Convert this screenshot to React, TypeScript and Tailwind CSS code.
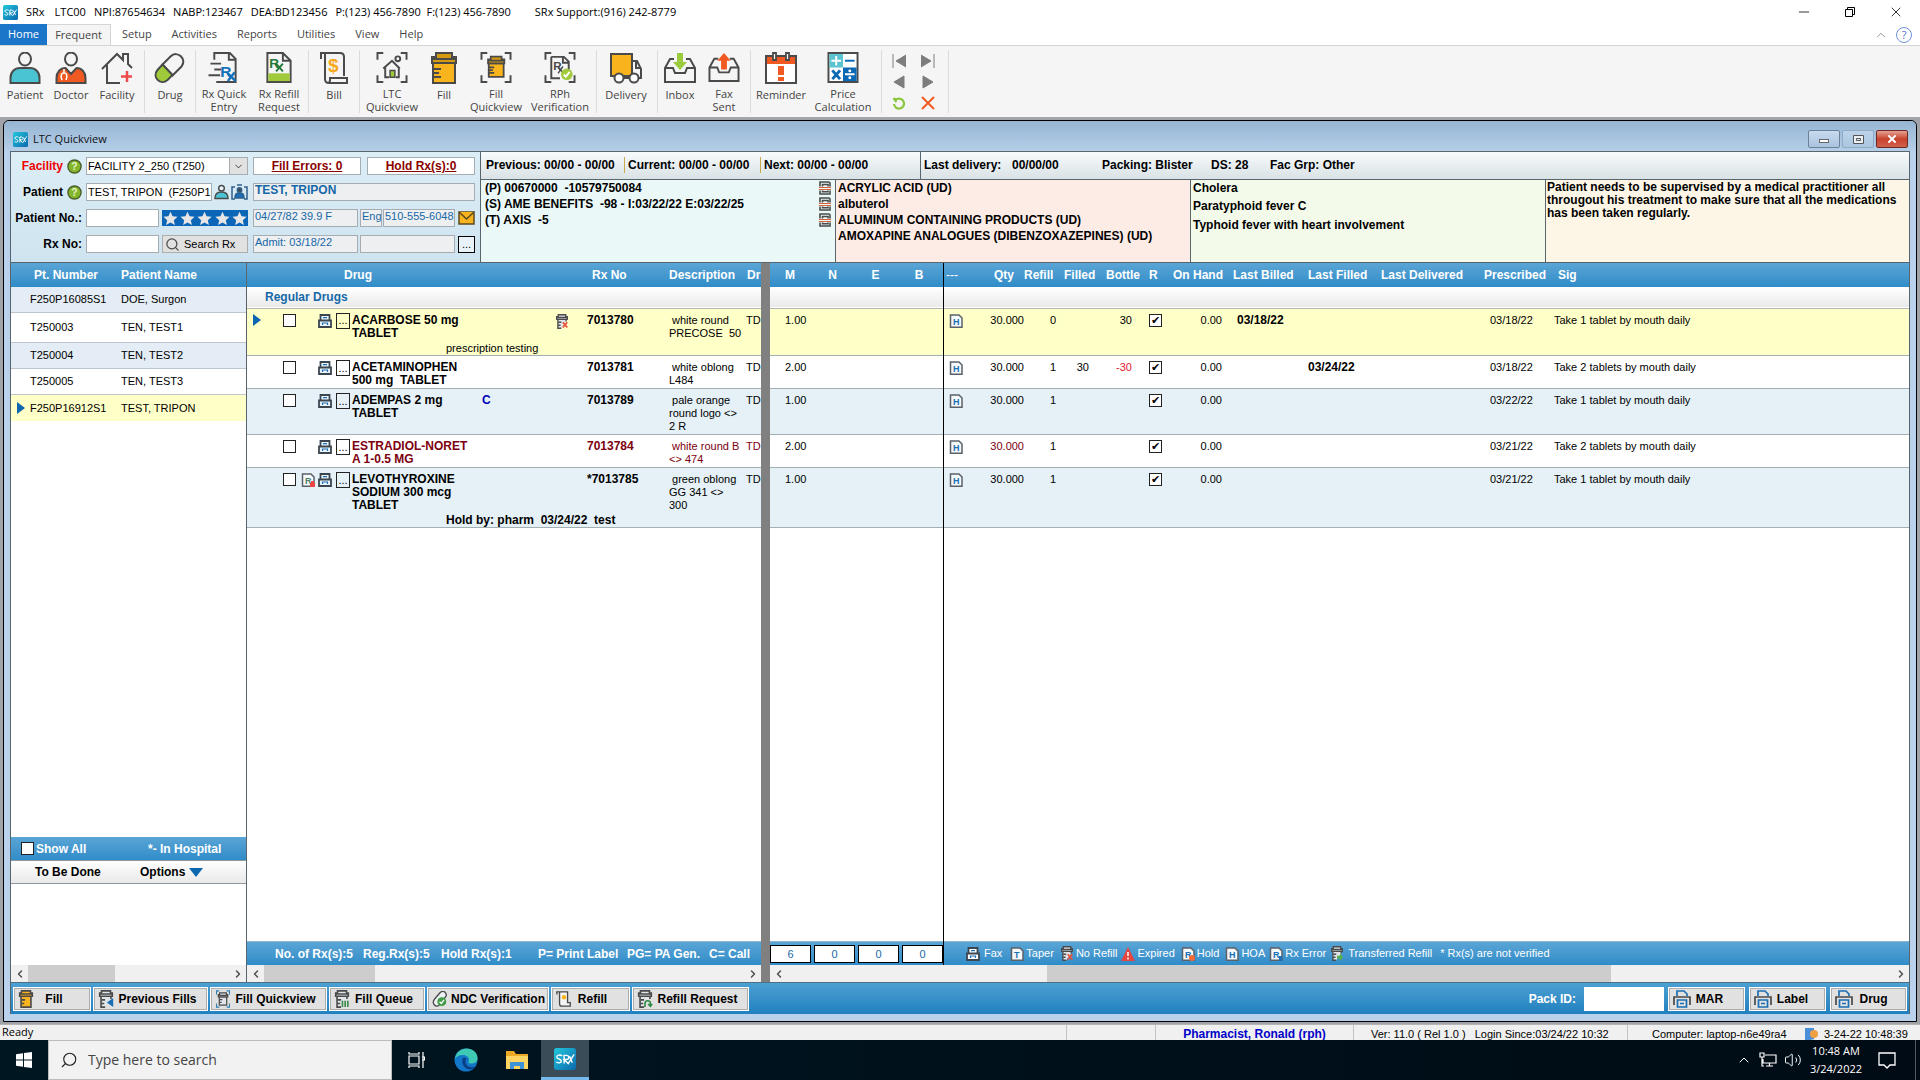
import React from 'react';
import { ChevronLeft, ChevronRight, ChevronUp, Minus, Search, Volume2, X } from 'lucide-react';

const DARK = '#4a4a4a';

/* ---------- Ribbon icons (32 x 32) ---------- */

const Icon32: React.FC<{ children: React.ReactNode }> = ({ children }) => (
  <svg viewBox="0 0 32 32" className="w-8 h-8" fill="none" stroke={DARK} strokeWidth="2" aria-hidden="true">
    {children}
  </svg>
);

const Brackets = () => <path d="M1 8V1h6M25 1h6v7M31 24v7h-6M7 31H1v-7" />;

const PatientIcon = () => (
  <Icon32>
    <ellipse cx="16" cy="7" rx="6" ry="6.500" />
    <path d="M1.500 31v-5c0-6 4-10 9.500-10h10c5.500 0 9.500 4 9.500 10v5z" fill="#4ac4d3" />
  </Icon32>
);

const DoctorIcon = () => (
  <Icon32>
    <ellipse cx="16" cy="7" rx="6" ry="6.500" />
    <path d="M1.500 31v-5c0-6 4-10 9-10l5.500 6 5.500-6c5 0 9 4 9 10v5z" fill="#f05a22" />
    <path d="M7 28c-2-6 0-7 2-7s4 1 2 7M9 21v-4" stroke="#fff" strokeWidth="1.500" />
  </Icon32>
);

const FacilityIcon = () => (
  <Icon32>
    <path d="M1 17 16 2l6 6V2h5v10l4 4M6 13v18h13" />
    <path d="M26 19v11M20 24.500h11" stroke="#ee4b4b" strokeWidth="2.500" />
  </Icon32>
);

const DrugIcon = () => (
  <Icon32>
    <path d="m8.500 12.500 8-8c7-7 17 3 11 10l-9 9z" />
    <path d="m8.500 12.500 10 10.500-5 5c-7 6-16-3-10-10z" fill="#a0ca3a" />
  </Icon32>
);

const RxQuickIcon = () => (
  <Icon32>
    <path d="M6 8V1h16l6 6v24H10M21 1v7h7M2 12h11M6 18h7M0 24h12M8 31h6" />
    <text x="12" y="26" fontSize="16" fontWeight="700" fontFamily="Liberation Sans, sans-serif" fill="#1271b8" stroke="none">R</text>
    <path d="m20 22 8 8M27 21l-7 9" stroke="#1271b8" strokeWidth="2.500" />
  </Icon32>
);

const RxRefillIcon = () => (
  <Icon32>
    <path d="M4 1h16l8 8v22H4zM20 1v8h8" />
    <path d="M5 22h22v8H5z" fill="#a0ca3a" stroke="none" />
    <text x="6" y="16" fontSize="14" fontWeight="700" fontFamily="Liberation Sans, sans-serif" fill="#23793a" stroke="none">R</text>
    <path d="m13 12 7 8M20 12l-7 8" stroke="#23793a" />
  </Icon32>
);

const BillIcon = () => (
  <Icon32>
    <path d="M3 7V1h19c3 0 4 2 4 4v19M7 2v25c0 3 2 4 4 4h18v-5H12v2c0 2-1 3-2 3" />
    <text x="10" y="20" fontSize="19" fontWeight="700" fontFamily="Liberation Sans, sans-serif" fill="#f7a81b" stroke="none">$</text>
  </Icon32>
);

const LtcIcon = () => (
  <Icon32>
    <Brackets />
    <path d="m7 17 9-8 8 8M9 16v10h4M20 26h3v-9" />
    <path d="M14 19h5v7h-5z" fill="#a0ca3a" strokeWidth="1.500" />
    <circle cx="22" cy="7" r="2.500" />
  </Icon32>
);

const Bottle: React.FC<{ fill?: string }> = ({ fill = '#f9b31c' }) => (
  <>
    <path d="M5 11h22v20H5z" fill={fill} />
    <path d="M8 1h16v4h4v6H4V5h4z" fill="#d69a10" />
    <path d="M4 7h24M5 17h8M5 21h6M5 25h8" />
  </>
);

const FillIcon = () => (
  <Icon32>
    <Bottle />
  </Icon32>
);

const FillQuickviewIcon = () => (
  <Icon32>
    <Brackets />
    <g transform="translate(5 4) scale(.7)" strokeWidth="2.600">
      <Bottle />
    </g>
  </Icon32>
);

const RphIcon = () => (
  <Icon32>
    <Brackets />
    <path d="M7 5h13l5 5v9M7 5v22h9M19 5v6h6" />
    <text x="9" y="19" fontSize="12" fontWeight="700" fontFamily="Liberation Sans, sans-serif" fill={DARK} stroke="none">R</text>
    <path d="m14 16 6 6M19 15l-5 7" strokeWidth="1.500" />
    <circle cx="23" cy="23" r="6" fill="#a0ca3a" stroke="none" />
    <path d="m20 23 2 2.500 4-5" stroke="#fff" />
  </Icon32>
);

const DeliveryIcon = () => (
  <Icon32>
    <path d="M1 2h21v22H1z" fill="#f9b31c" />
    <path d="M22 9h5l4 8v9H4M26 9v7h5" />
    <circle cx="9" cy="26" r="4.500" fill="#fff" />
    <circle cx="24" cy="26" r="4.500" fill="#fff" />
  </Icon32>
);

const TrayBase = () => <path d="M10 7H6l-5 9v14h30V16l-5-9h-4M1 16h8l2 5h10l2-5h8" />;

const InboxIcon = () => (
  <Icon32>
    <TrayBase />
    <path d="M13 1h6v9h4l-7 8-7-8h4z" fill="#9bcb3c" stroke="none" />
  </Icon32>
);

const FaxSentIcon = () => (
  <Icon32>
    <TrayBase />
    <path d="M13 18h6V9h4l-7-8-7 8h4z" fill="#f05a22" stroke="none" />
  </Icon32>
);

const ReminderIcon = () => (
  <Icon32>
    <path d="M1 4h30v27H1z" fill="#fff" />
    <path d="M2 5h28v7H2z" fill="#f05a22" stroke="none" />
    <path d="M8 1h3v7H8zM21 1h3v7h-3z" fill="#fff" strokeWidth="1.800" />
    <path d="M13 14h6v9h-6zM13 25h6v4h-6z" fill="#f05a22" stroke="none" />
  </Icon32>
);

const PriceIcon = () => (
  <Icon32>
    <path d="M1 1h30v30H1z" fill="#fff" />
    <path d="M2 2h14v14H2z" fill="#5cc3d0" stroke="none" />
    <path d="M16 16h14v14H16z" fill="#0a69b4" stroke="none" />
    <path d="M9 4v10M4 9h10M18 23h10" stroke="#fff" />
    <path d="M18 9h10" stroke="#0a69b4" />
    <path d="m5 19 8 9M13 19l-8 9" stroke="#0a69b4" strokeWidth="3" />
    <circle cx="23" cy="19.500" r="1.500" fill="#fff" stroke="none" />
    <circle cx="23" cy="26.500" r="1.500" fill="#fff" stroke="none" />
  </Icon32>
);

/* ---------- Small icons ---------- */

const Logo: React.FC<{ className: string }> = ({ className }) => (
  <svg viewBox="0 0 24 24" className={className} aria-hidden="true">
    <defs>
      <linearGradient id="srx" x1="0" y1="0" x2="1" y2="1">
        <stop offset="0" stopColor="#22c8dc" />
        <stop offset="1" stopColor="#0a68ae" />
      </linearGradient>
    </defs>
    <rect width="24" height="24" rx="3" fill="url(#srx)" />
    <path d="M9 8.500C6.500 7 3 7.500 3 9.800c0 2.700 5 1.700 5 4.400 0 2.300-3.500 2.500-5.500 1M11 17V8h2.500c3.500 0 3.500 4.500 0 4.500H11l4.500 4.500L22 7M17 9l3 7" fill="none" stroke="#fff" strokeWidth="1.500" />
  </svg>
);

const FaxIcon: React.FC<{ light?: boolean }> = ({ light }) => (
  <svg viewBox="0 0 14 14" className="w-3.5 h-3.5 shrink-0" fill={light ? '#fff' : '#eaf4fb'} stroke="#3c4650" strokeWidth="1.800" aria-hidden="true">
    <path d="M2.500 1h9v5.500h-9zM1 6.500h12V13H1z" />
    <path d="M5 3.700h4M4.500 11V9h5v2" stroke="#1c6fb4" strokeWidth="1.200" />
  </svg>
);

const PageIcon: React.FC<{ letter: string; badge?: 'lock' | 'dot' | 'mark' }> = ({ letter, badge }) => (
  <svg viewBox="0 0 14 14" className="w-3.5 h-3.5 shrink-0" aria-hidden="true">
    <path d="M1.500 1h8.500l3 3v9.200H1.500z" fill="#f4f9fc" stroke="#5b6168" strokeWidth="1.500" />
    <text x="4" y="10.500" fontSize="9" fontWeight="700" fill={badge === 'lock' ? '#4f7d6a' : '#1c6fb4'} fontFamily="Liberation Sans, sans-serif">{letter}</text>
    {badge === 'lock' && <path d="M9 10h5v4H9zM10 8h3v2h-3z" fill="#ee4444" />}
    {badge === 'dot' && <circle cx="11" cy="11" r="3" fill="#f26b3a" />}
    {badge === 'mark' && <path d="M10 9h3v5h-3z" fill="#1c6fb4" />}
  </svg>
);

const BottleSmall: React.FC<{ className: string; accent?: 'x' | 'back' | 'queue' | 'refresh' | 'frame' | 'arrow'; amber?: boolean }> = ({ className, accent, amber }) => (
  <svg viewBox="0 0 16 20" className={className} fill={amber ? '#f9b31c' : '#dfe5e8'} stroke="#4a4a4a" strokeWidth="1.800" aria-hidden="true">
    {accent === 'frame' && <path d="M.8 5V1h3M12 1h3.200v4M15.200 15v4H12M4 19H.8v-4" fill="none" stroke="#2b7fae" strokeWidth="1.200" />}
    <g transform={accent === 'frame' ? 'translate(2 2.500) scale(.75)' : undefined}>
      <path d={accent && accent !== 'frame' ? 'M7 19H2.500V7h11v3' : 'M2.500 7h11v12h-11z'} />
      <path d="M3 1h10v2.500h2V7H1V3.500h2z" />
      <path d="M1 4.500h14M3 11h4M3 15h3" />
    </g>
    {accent === 'x' && <path d="m9 11 6 7M15 11l-6 7" stroke="#e8503a" strokeWidth="2.400" />}
    {accent === 'back' && <path d="M16 9v10l-7-5z" fill="#1c6fb4" stroke="none" />}
    {accent === 'queue' && <path d="M8.500 12v7M11.500 12v7M14.500 12v7" stroke="#3a8a4a" />}
    {accent === 'refresh' && <path d="M8 19v-4a3 3 0 0 1 6 0v2M11.500 15.500l2.500 2.500 2-2.500" stroke="#2e8a44" fill="none" />}
    {accent === 'arrow' && <path d="M8 13h4v-3l4 5-4 5v-3H8z" fill="#57b04a" stroke="none" />}
  </svg>
);

const HelpDot = () => (
  <svg viewBox="0 0 16 16" className="w-[15px] h-[15px] shrink-0" aria-hidden="true">
    <circle cx="8" cy="8" r="7" fill="#83b62b" stroke="#4b5d2c" strokeWidth="1.500" />
    <text x="8" y="12" textAnchor="middle" fontSize="11" fontWeight="700" fill="#e6f4c8" fontFamily="Liberation Sans, sans-serif">?</text>
  </svg>
);

const CardIcon = () => (
  <svg viewBox="0 0 12 14" className="w-3 h-3.5" fill="none" stroke="#4a4a4a" strokeWidth="1.600" aria-hidden="true">
    <path d="M1 5.500V1h9l1 1v3.500M1 9.500V13h10V9.500M3.500 5.500v-2H9v2M3.500 9.500v1.300H9V9.500" />
    <path d="M0 6.500h12M0 8.500h12" stroke="#d9653b" strokeWidth="1.200" />
  </svg>
);

const PrinterIcon = () => (
  <svg viewBox="0 0 18 18" className="w-[18px] h-[18px]" fill="none" stroke="#4a4a4a" strokeWidth="1.700" aria-hidden="true">
    <path d="M4 6V1h7l3 3v2" stroke="#1c6fb4" />
    <path d="M1 15V7h16v8" />
    <path d="M4.500 10h9v7h-9zM7 13.500h4" stroke="#1c6fb4" />
  </svg>
);

const Triangle: React.FC = () => (
  <svg viewBox="0 0 8 12" className="w-2 h-3" fill="#0c66b0" aria-hidden="true">
    <path d="m0 0 8 6-8 6z" />
  </svg>
);

/* ---------- Data ---------- */

const TITLE_ITEMS = ['LTC00', 'NPI:87654634', 'NABP:123467', 'DEA:BD123456'];
const MENU = ['Setup', 'Activities', 'Reports', 'Utilities', 'View', 'Help'];

interface RibbonItem {
  label: string;
  icon: React.FC;
  width: string;
}

const RIBBON: { pad: string; items: RibbonItem[] }[] = [
  {
    pad: 'pl-0.5 pr-1',
    items: [
      { label: 'Patient', icon: PatientIcon, width: 'w-[46px]' },
      { label: 'Doctor', icon: DoctorIcon, width: 'w-[46px]' },
      { label: 'Facility', icon: FacilityIcon, width: 'w-[46px]' },
    ],
  },
  { pad: '', items: [{ label: 'Drug', icon: DrugIcon, width: 'w-[50px]' }] },
  {
    pad: 'pr-0.5',
    items: [
      { label: 'Rx Quick\nEntry', icon: RxQuickIcon, width: 'w-14' },
      { label: 'Rx Refill\nRequest', icon: RxRefillIcon, width: 'w-[54px]' },
    ],
  },
  { pad: '', items: [{ label: 'Bill', icon: BillIcon, width: 'w-[50px]' }] },
  {
    pad: 'pr-1',
    items: [
      { label: 'LTC\nQuickview', icon: LtcIcon, width: 'w-16' },
      { label: 'Fill', icon: FillIcon, width: 'w-10' },
      { label: 'Fill\nQuickview', icon: FillQuickviewIcon, width: 'w-16' },
      { label: 'RPh\nVerification', icon: RphIcon, width: 'w-16' },
    ],
  },
  { pad: 'pr-0.5', items: [{ label: 'Delivery', icon: DeliveryIcon, width: 'w-[58px]' }] },
  {
    pad: 'pr-1',
    items: [
      { label: 'Inbox', icon: InboxIcon, width: 'w-11' },
      { label: 'Fax\nSent', icon: FaxSentIcon, width: 'w-11' },
    ],
  },
  {
    pad: 'pr-1.5',
    items: [
      { label: 'Reminder', icon: ReminderIcon, width: 'w-[60px]' },
      { label: 'Price\nCalculation', icon: PriceIcon, width: 'w-16' },
    ],
  },
];

const PATIENTS = [
  { number: 'F250P16085S1', name: 'DOE, Surgon', row: 'h-[25px] bg-[#e4edf5]' },
  { number: 'T250003', name: 'TEN, TEST1', row: 'h-[30px] bg-white' },
  { number: 'T250004', name: 'TEN, TEST2', row: 'h-[26px] bg-[#e4edf5]' },
  { number: 'T250005', name: 'TEN, TEST3', row: 'h-[26px] bg-white' },
  { number: 'F250P16912S1', name: 'TEST, TRIPON', row: 'h-[27px] bg-[#ffffc8]', current: true },
];

interface Rx {
  drug: string;
  rxNo: string;
  desc: string;
  morning: string;
  refill: string;
  filled?: string;
  bottle?: string;
  billed?: string;
  lastFilled?: string;
  prescribed: string;
  sig: string;
  bg: string;
  height: string;
  mainHeight: string;
  note?: string;
  noteClass?: string;
  flag?: string;
  noRefill?: boolean;
  hold?: boolean;
  current?: boolean;
  expired?: boolean;
}

const RXS: Rx[] = [
  {
    drug: 'ACARBOSE 50 mg\nTABLET', rxNo: '7013780', desc: ' white round\nPRECOSE  50', morning: '1.00', refill: '0', bottle: '30',
    billed: '03/18/22', prescribed: '03/18/22', sig: 'Take 1 tablet by mouth daily', bg: 'bg-[#ffffc8]', height: 'h-[47px]',
    mainHeight: 'h-[34px]', note: 'prescription testing', noteClass: 'text-[11px]', noRefill: true, current: true,
  },
  {
    drug: 'ACETAMINOPHEN\n500 mg  TABLET', rxNo: '7013781', desc: ' white oblong\nL484', morning: '2.00', refill: '1', filled: '30', bottle: '-30',
    lastFilled: '03/24/22', prescribed: '03/18/22', sig: 'Take 2 tablets by mouth daily', bg: 'bg-white', height: 'h-[33px]', mainHeight: 'h-[33px]',
  },
  {
    drug: 'ADEMPAS 2 mg\nTABLET', rxNo: '7013789', desc: ' pale orange\nround logo <>\n2 R', morning: '1.00', refill: '1',
    prescribed: '03/22/22', sig: 'Take 1 tablet by mouth daily', bg: 'bg-[#e5f0f7]', height: 'h-[46px]', mainHeight: 'h-[46px]', flag: 'C',
  },
  {
    drug: 'ESTRADIOL-NORET\nA 1-0.5 MG', rxNo: '7013784', desc: ' white round B\n<> 474', morning: '2.00', refill: '1',
    prescribed: '03/21/22', sig: 'Take 2 tablets by mouth daily', bg: 'bg-white', height: 'h-[33px]', mainHeight: 'h-[33px]', expired: true,
  },
  {
    drug: 'LEVOTHYROXINE\nSODIUM 300 mcg\nTABLET', rxNo: '*7013785', desc: ' green oblong\nGG 341 <>\n300', morning: '1.00', refill: '1',
    prescribed: '03/21/22', sig: 'Take 1 tablet by mouth daily', bg: 'bg-[#e5f0f7]', height: 'h-[60px]', mainHeight: 'h-[46px]',
    note: 'Hold by: pharm  03/24/22  test', noteClass: 'text-xs font-bold', hold: true,
  },
];

const HEAD = 'h-6 bg-linear-to-b from-[#5aa5d6] to-[#2f8cc8] text-white text-xs font-bold text-left whitespace-pre';
const CATEGORY = 'h-[21px] bg-linear-to-b from-white to-[#eaeaea] border-b border-[#b5b5b5]';
const CELL = 'align-top pt-[5px] leading-[13px] whitespace-pre';
const FOOTER = 'h-6 shrink-0 bg-linear-to-b from-[#5aa5d6] to-[#2f8cc8] text-white border-t border-[#8fb4cc]';
const FIELD = 'h-[18px] bg-[#eeeff0] border border-[#a5acb2] text-[#1668a8] leading-3 pl-px whitespace-nowrap overflow-hidden';
const INPUT = 'h-[18px] bg-white border border-[#a5acb2] text-[11px] font-normal leading-4 pl-px min-w-0';

/* ---------- Shared pieces ---------- */

const Scrollbar: React.FC<{ thumb: string }> = ({ thumb }) => (
  <div className="flex h-[17px] shrink-0 bg-[#f0f0f0] text-[#505050]">
    <button aria-label="Scroll left" className="w-[17px] grid place-items-center"><ChevronLeft size={12} strokeWidth={3} /></button>
    <div className="flex-1"><div className={`h-full bg-[#cdcdcd] ${thumb}`} /></div>
    <button aria-label="Scroll right" className="w-[17px] grid place-items-center"><ChevronRight size={12} strokeWidth={3} /></button>
  </div>
);

const Tick: React.FC<{ label: string; checked?: boolean; className?: string }> = ({ label, checked, className = '' }) => (
  <input
    type="checkbox"
    aria-label={label}
    defaultChecked={checked}
    className={`appearance-none w-[13px] h-[13px] block shrink-0 bg-white border border-[#222] text-[11px] leading-[11px] text-center font-['DejaVu_Sans'] checked:before:content-['✔'] ${className}`}
  />
);

const ToolButton: React.FC<{ label: string; size: string; children: React.ReactNode }> = ({ label, size, children }) => (
  <button className={`h-6 ${size} flex items-center bg-[#e1e1e1] border border-white outline-1 -outline-offset-2 outline-[#adadad] pl-1 text-xs font-bold text-black whitespace-nowrap`}>
    {children}
    <span className="flex-1 text-center">{label}</span>
  </button>
);

/* ---------- Application header ---------- */

const AppHeader = () => (
  <header className="font-['Open_Sans',sans-serif] text-[11px] text-black">
    <div className="flex items-center h-6 pl-[3px] bg-white whitespace-pre">
      <Logo className="w-[15px] h-[15px] mr-2" />
      <span className="mr-2.5">SRx</span>
      {TITLE_ITEMS.map((item) => (
        <span key={item} className="mr-2">{item}</span>
      ))}
      <span>P:(123) 456-7890  F:(123) 456-7890</span>
      <span className="ml-6">SRx Support:(916) 242-8779</span>
      <div className="ml-auto flex items-center gap-[30px] pr-4">
        <button aria-label="Minimize"><Minus size={16} strokeWidth={1.2} /></button>
        <button aria-label="Restore">
          <svg viewBox="0 0 12 12" className="w-3 h-3 mx-0.5" fill="none" stroke="#000"><path d="M1.500 3.500h7v7h-7zM3.500 3.500v-2h7v7h-2" /></svg>
        </button>
        <button aria-label="Close"><X size={16} strokeWidth={1.2} /></button>
      </div>
    </div>

    <nav className="flex h-[21px] bg-white text-[#444] items-stretch">
      <button className="w-[47px] bg-[#1b75c9] text-white">Home</button>
      <button className="w-16 bg-[#f5f5f5] border-t border-r border-[#d5d5d5]">Frequent</button>
      <div className="flex items-center gap-5 pl-[11px]">
        {MENU.map((item) => (
          <button key={item}>{item}</button>
        ))}
      </div>
      <div className="ml-auto flex items-center gap-2 pr-2">
        <button aria-label="Collapse ribbon"><ChevronUp size={14} strokeWidth={1.5} color="#888" /></button>
        <button aria-label="Help" className="w-4 h-4 rounded-full border border-[#6f93d8] text-[#4a76c9] leading-[14px]">?</button>
      </div>
    </nav>

    <div className="flex h-[73px] py-1 bg-[#f5f5f5] border-y border-t-[#d5d5d5] border-b-[#a8a8a8] text-[#444]">
      {RIBBON.map((group, i) => (
        <div key={i} className={`flex border-r border-[#dcdcdc] ${group.pad}`}>
          {group.items.map(({ label, icon: Glyph, width }) => (
            <button key={label} className={`${width} flex flex-col items-center pt-0.5`}>
              <Glyph />
              <span className="mt-1 leading-[13px] whitespace-pre text-center">{label}</span>
            </button>
          ))}
        </div>
      ))}
      <div className="grid grid-cols-[29px_29px] place-items-center w-[67px] pl-0.5 border-r border-[#dcdcdc]">
        {[
          ['First', 'M1 0v14M14 1v12L4 7z', '#7d7d7d'],
          ['Last', 'M13 0v14M0 1v12l10-6z', '#7d7d7d'],
          ['Previous', 'M12 1v12L2 7z', '#7d7d7d'],
          ['Next', 'M2 1v12l10-6z', '#7d7d7d'],
        ].map(([name, d, color]) => (
          <button key={name} aria-label={name}>
            <svg viewBox="0 0 14 14" className="w-3.5 h-3.5" fill={color} stroke={color}><path d={d} /></svg>
          </button>
        ))}
        <button aria-label="Refresh">
          <svg viewBox="0 0 14 14" className="w-3.5 h-3.5" fill="none" stroke="#8cc63f" strokeWidth="2.200"><path d="M2 8a5 5 0 1 0 3-5H2M1.500 2l3 4" /></svg>
        </button>
        <button aria-label="Cancel">
          <svg viewBox="0 0 14 14" className="w-3.5 h-3.5" stroke="#f05a22" strokeWidth="2"><path d="m1 1 12 12M13 1 1 13" /></svg>
        </button>
      </div>
    </div>
  </header>
);

/* ---------- Patient summary ---------- */

const FormRow: React.FC<{ label: string; id: string; help?: boolean; red?: boolean; children: React.ReactNode }> = ({ label, id, help, red, children }) => (
  <div className="flex items-center h-[18px] pl-px">
    <label htmlFor={id} className={`w-[70px] mr-1 flex justify-end items-center gap-1 text-xs font-bold whitespace-nowrap ${red ? 'text-[#f00000]' : 'text-black'}`}>
      {label}
      {help && <HelpDot />}
    </label>
    {children}
  </div>
);

const PatientForm = () => (
  <div className="w-[470px] shrink-0 flex flex-col gap-2 pt-[5px] border-r border-[#59656d] bg-linear-to-b from-[#dceef6] to-[#cfe4f0]">
    <FormRow label="Facility" id="facility" help red>
      <div className="relative w-[162px] mr-[5px]">
        <select id="facility" className={`${INPUT} w-full appearance-none block`}>
          <option>FACILITY 2_250 (T250)</option>
        </select>
        <span className="pointer-events-none absolute right-0 top-0 w-[19px] h-[18px] grid place-items-center bg-[#e1e1e1] border border-[#a5acb2]">
          <ChevronRight size={11} strokeWidth={1.5} className="rotate-90" />
        </span>
      </div>
      <button className="w-[108px] h-[18px] mr-1.5 bg-white border border-[#a5acb2] text-xs leading-4 font-bold underline text-[#8b0000]">Fill Errors:  0</button>
      <button className="w-[108px] h-[18px] bg-white border border-[#a5acb2] text-xs leading-4 font-bold underline text-[#8b0000]">Hold Rx(s):0</button>
    </FormRow>
    <FormRow label="Patient" id="patient" help>
      <input id="patient" defaultValue="TEST, TRIPON  (F250P16912S1)" className={`${INPUT} w-[126px]`} />
      <button aria-label="Patient profile" className="mx-0.5">
        <svg viewBox="0 0 16 16" className="w-[15px] h-4" fill="#4ac4d3" stroke="#4a4a4a" strokeWidth="1.500"><circle cx="8" cy="4" r="3" fill="#e8f4fa" /><path d="M1 15c0-5 2-7 7-7s7 2 7 7z" /></svg>
      </button>
      <button aria-label="Patient card" className="mr-[5px]">
        <svg viewBox="0 0 17 16" className="w-[17px] h-4" fill="none" stroke="#2f5f8c" strokeWidth="1.500"><path d="M4 3H1v12h3M13 3h3v12h-3" /><circle cx="8.500" cy="6" r="2.200" fill="#4a4a4a" /><path d="M4 14c0-4 1-5 4.500-5s4.500 1 4.500 5z" fill="#1c6fb4" /><path d="M6 1h5" /></svg>
      </button>
      <div className={`${FIELD} w-[222px] text-xs leading-3 font-bold`}>TEST, TRIPON</div>
    </FormRow>
    <FormRow label="Patient No.:" id="patient-no">
      <input id="patient-no" className={`${INPUT} w-[73px] mr-[3px]`} />
      <div className="w-[86px] h-4 mr-[5px] flex items-center justify-around bg-[#0c66b8]">
        {[1, 2, 3, 4, 5].map((n) => (
          <svg key={n} viewBox="0 0 24 24" className="w-[15px] h-[15px]" fill="#e6e6e6"><path d="m12 1 3.300 7.400 8 .8-6 5.400 1.700 7.900-7-4.100-7 4.100 1.700-7.900-6-5.400 8-.8z" /></svg>
        ))}
      </div>
      <div className={`${FIELD} w-[105px] mr-0.5 text-[11px] font-normal`}>04/27/82 39.9 F</div>
      <div className={`${FIELD} w-[22px] mr-px text-[11px] font-normal`}>Eng</div>
      <div className={`${FIELD} w-[72px] mr-[3px] text-[11px] font-normal`}>510-555-6048</div>
      <button aria-label="Send mail">
        <svg viewBox="0 0 17 14" className="w-[17px] h-3.5" fill="#f9b31c" stroke="#5a4a20" strokeWidth="1.500"><path d="M1 1h15v12H1z" /><path d="m1 1 7.500 7L16 1" /></svg>
      </button>
    </FormRow>
    <FormRow label="Rx No:" id="rx-no">
      <input id="rx-no" className={`${INPUT} w-[73px] mr-[3px]`} />
      <button className="w-[86px] h-[18px] mr-[5px] flex items-center gap-1 pl-0.5 bg-[#e1e1e1] border border-[#adadad] text-[11px] font-normal">
        <Search size={15} strokeWidth={2} color="#4a4a4a" />
        Search Rx
      </button>
      <div className={`${FIELD} w-[105px] mr-0.5 text-[11px] font-normal`}>Admit: 03/18/22</div>
      <div className={`${FIELD} w-[95px] mr-[3px]`} />
      <button className="w-[17px] h-[17px] border border-black bg-[#e8f2f8] text-[11px] font-normal leading-3">...</button>
    </FormRow>
  </div>
);

const Summary = () => (
  <section className="flex h-[111px] shrink-0 border-b border-[#59656d] text-xs font-bold">
    <PatientForm />
    <div className="flex-1 min-w-0 flex flex-col">
      <div className="flex h-7 shrink-0 border-b border-[#59656d] bg-linear-to-b from-[#f8fbfc] to-[#d9e2e5] whitespace-pre">
        <div className="w-[440px] flex items-center pl-[5px] pb-0.5 border-r border-[#59656d]">
          <span className="w-[139px] mr-[3px] border-r border-[#c9a84a]">Previous: 00/00 - 00/00</span>
          <span className="w-[133px] mr-[3px] border-r border-[#c9a84a]">Current: 00/00 - 00/00</span>
          <span>Next: 00/00 - 00/00</span>
        </div>
        <div className="flex items-center pl-[3px] pb-0.5">
          <span className="w-[88px]">Last delivery:</span>
          <span className="w-[90px]">00/00/00</span>
          <span className="w-[109px]">Packing: Blister</span>
          <span className="w-[59px]">DS: 28</span>
          <span>Fac Grp: Other</span>
        </div>
      </div>
      <div className="flex-1 grid grid-cols-[355px_355px_355px_1fr]">
        <div className="flex justify-between pl-1 pr-1 bg-[#eaf9f8] border-r border-[#59656d] leading-4 whitespace-pre">
          <ul>
            <li>(P) 00670000  -10579750084</li>
            <li>(S) AME BENEFITS  -98 - I:03/22/22 E:03/22/25</li>
            <li>(T) AXIS  -5</li>
          </ul>
          <div className="flex flex-col gap-0.5 pt-px">
            <CardIcon />
            <CardIcon />
            <CardIcon />
          </div>
        </div>
        <ul className="pl-0.5 bg-[#fdece6] border-r border-[#59656d] leading-4">
          <li>ACRYLIC ACID (UD)</li>
          <li>albuterol</li>
          <li>ALUMINUM CONTAINING PRODUCTS (UD)</li>
          <li>AMOXAPINE ANALOGUES (DIBENZOXAZEPINES) (UD)</li>
        </ul>
        <ul className="pl-0.5 bg-[#f3faea] border-r border-[#59656d] leading-[19px]">
          <li className="leading-4 pb-px">Cholera</li>
          <li>Paratyphoid fever C</li>
          <li>Typhoid fever with heart involvement</li>
        </ul>
        <p className="pl-px pr-3 pt-px bg-[#fdf6e6] leading-[13px]">
          Patient needs to be supervised by a medical practitioner all througout his treatment to make sure that all the medications has been taken regularly.
        </p>
      </div>
    </div>
  </section>
);

/* ---------- Grids ---------- */

const PatientList = () => (
  <aside className="w-[236px] shrink-0 flex flex-col bg-white border-r border-[#59656d]">
    <table className="w-full table-fixed border-collapse text-[11px]">
      <colgroup>
        <col className="w-[19px]" />
        <col className="w-[91px]" />
        <col />
      </colgroup>
      <thead>
        <tr className={HEAD}>
          <th colSpan={2} className="pl-[23px]">Pt. Number</th>
          <th>Patient Name</th>
        </tr>
      </thead>
      <tbody>
        {PATIENTS.map((p) => (
          <tr key={p.number} className={`${p.row} border-b border-[#bcc6cc] last:border-b-0`}>
            <td className="pl-1.5">{p.current && <Triangle />}</td>
            <td>{p.number}</td>
            <td>{p.name}</td>
          </tr>
        ))}
      </tbody>
    </table>
    <div className="flex-1" />
    <div className="flex items-center h-[23px] shrink-0 pl-2.5 bg-linear-to-b from-[#5aa5d6] to-[#2f8cc8] text-white text-xs font-bold">
      <label className="flex items-center gap-0.5 w-[127px]">
        <Tick label="Show All" />
        Show All
      </label>
      <span>*- In Hospital</span>
    </div>
    <div className="flex items-center h-6 shrink-0 pl-6 bg-linear-to-b from-white to-[#e9e9e9] border-y border-[#8f989e] text-xs font-bold">
      <span className="w-[105px]">To Be Done</span>
      <button className="flex items-center gap-1">
        Options
        <svg viewBox="0 0 14 9" className="w-3.5 h-[9px]" fill="#0c66b0"><path d="M0 0h14L7 9z" /></svg>
      </button>
    </div>
    <div className="h-[81px] shrink-0" />
    <Scrollbar thumb="w-[87px]" />
  </aside>
);

const DrugGrid = () => (
  <section className="w-[514px] shrink-0 flex flex-col bg-white overflow-hidden">
    <table className="w-full table-fixed border-collapse text-[11px]">
      <colgroup>
        <col className="w-[30px]" />
        <col className="w-[22px]" />
        <col className="w-[18px]" />
        <col className="w-[18px]" />
        <col className="w-4" />
        <col className="w-[124px]" />
        <col className="w-[72px]" />
        <col className="w-9" />
        <col className="w-[84px]" />
        <col className="w-[76px]" />
        <col />
      </colgroup>
      <thead>
        <tr className={HEAD}>
          <th colSpan={8} className="pl-[97px]">Drug</th>
          <th className="pl-[9px]">Rx No</th>
          <th className="pl-0.5">Description</th>
          <th className="pl-1">Dr</th>
        </tr>
      </thead>
      <tbody>
        <tr className={CATEGORY}>
          <td colSpan={11} className="pl-[18px] text-xs leading-4 font-bold text-[#1668a8]">Regular Drugs</td>
        </tr>
      </tbody>
      {RXS.map((rx) => (
        <tbody key={rx.rxNo} className={`${rx.bg} border-b border-[#a3b0b3] ${rx.expired ? 'text-[#7d0010]' : 'text-black'}`}>
          <tr className={rx.mainHeight}>
            <td className={`${CELL} pl-1.5`}>{rx.current && <Triangle />}</td>
            <td className={`${CELL} pl-1.5`}><Tick label={`Select ${rx.rxNo}`} /></td>
            <td className={`${CELL} pl-0.5`}>{rx.hold && <PageIcon letter="R" badge="lock" />}</td>
            <td className={`${CELL} pl-px`}><FaxIcon /></td>
            <td className="align-top pt-1 pl-px">
              <button aria-label={`Details ${rx.rxNo}`} className="block w-3.5 h-4 border border-[#222] leading-[13px] text-black">...</button>
            </td>
            <td className={`${CELL} pl-px text-xs leading-[13px] font-bold`}>{rx.drug}</td>
            <td className={`${CELL} pl-[7px] text-xs leading-[13px] font-bold text-[#0000b8]`}>{rx.flag}</td>
            <td className={`${CELL} pl-2`}>{rx.noRefill && <BottleSmall className="w-3.5 h-[15px]" accent="x" />}</td>
            <td className={`${CELL} pl-1 text-xs leading-[13px] font-bold`}>{rx.rxNo}</td>
            <td className={`${CELL} pl-0.5`}>{rx.desc}</td>
            <td className={`${CELL} pl-[3px]`}>TD</td>
          </tr>
          {rx.note && (
            <tr>
              <td colSpan={11} className={`align-top pl-[199px] leading-[13px] whitespace-pre ${rx.noteClass}`}>{rx.note}</td>
            </tr>
          )}
        </tbody>
      ))}
    </table>
    <div className="flex-1" />
    <div className={`${FOOTER} flex items-center pl-7 text-xs font-bold whitespace-pre`}>
      <span className="w-[88px]">No. of Rx(s):5</span>
      <span className="w-[78px]">Reg.Rx(s):5</span>
      <span className="w-[97px]">Hold Rx(s):1</span>
      <span className="w-[89px]">P= Print Label</span>
      <span className="w-[82px]">PG= PA Gen.</span>
      <span>C= Call</span>
    </div>
    <Scrollbar thumb="w-[111px]" />
  </section>
);

const DoseGrid = () => (
  <div className="w-[174px] shrink-0 flex flex-col border-r border-black">
    <table className="w-full table-fixed border-collapse text-[11px]">
      <thead>
        <tr className={HEAD}>
          {['M', 'N', 'E', 'B'].map((slot) => (
            <th key={slot} className="pl-[15px]">{slot}</th>
          ))}
        </tr>
      </thead>
      <tbody>
        <tr className={CATEGORY}><td colSpan={4} /></tr>
        {RXS.map((rx) => (
          <tr key={rx.rxNo} className={`${rx.bg} ${rx.height} border-b border-[#a3b0b3]`}>
            <td className={`${CELL} pl-[15px]`}>{rx.morning}</td>
            <td colSpan={3} />
          </tr>
        ))}
      </tbody>
    </table>
    <div className="flex-1" />
    <div className={`${FOOTER} flex items-center gap-[3px]`}>
      {['6', '0', '0', '0'].map((total, i) => (
        <output key={i} className="flex-1 h-[18px] bg-white border border-black text-center text-[11px] leading-4 text-[#1668a8]">{total}</output>
      ))}
    </div>
  </div>
);

const DetailGrid = () => (
  <div className="flex-1 min-w-0 flex flex-col">
    <table className="w-full table-fixed border-collapse text-[11px]">
      <colgroup>
        <col className="w-[38px]" />
        <col className="w-[42px]" />
        <col className="w-8" />
        <col className="w-10" />
        <col className="w-12" />
        <col className="w-6" />
        <col className="w-[60px]" />
        <col className="w-[76px]" />
        <col className="w-[72px]" />
        <col className="w-[104px]" />
        <col className="w-[72px]" />
        <col />
      </colgroup>
      <thead>
        <tr className={HEAD}>
          <th className="pl-0.5 font-normal">---</th>
          <th className="pl-3">Qty</th>
          <th>Refill</th>
          <th className="pl-2">Filled</th>
          <th className="pl-2.5">Bottle</th>
          <th className="pl-[5px]">R</th>
          <th className="pl-[5px]">On Hand</th>
          <th className="pl-[5px]">Last Billed</th>
          <th className="pl-1">Last Filled</th>
          <th className="pl-[5px]">Last Delivered</th>
          <th className="pl-1">Prescribed</th>
          <th className="pl-1.5">Sig</th>
        </tr>
      </thead>
      <tbody>
        <tr className={CATEGORY}><td colSpan={12} /></tr>
        {RXS.map((rx) => (
          <tr key={rx.rxNo} className={`${rx.bg} ${rx.height} border-b border-[#a3b0b3]`}>
            <td className={`${CELL} pl-[5px]`}><PageIcon letter="H" /></td>
            <td className={`${CELL} text-right ${rx.expired ? 'text-[#7d0010]' : ''}`}>30.000</td>
            <td className={`${CELL} text-right`}>{rx.refill}</td>
            <td className={`${CELL} pr-[7px] text-right`}>{rx.filled}</td>
            <td className={`${CELL} pr-3 text-right ${rx.bottle === '-30' ? 'text-[#e0202c]' : ''}`}>{rx.bottle}</td>
            <td className={`${CELL} pl-[5px]`}><Tick label={`Refillable ${rx.rxNo}`} checked /></td>
            <td className={`${CELL} pr-1.5 text-right`}>0.00</td>
            <td className={`${CELL} pl-[9px] text-xs leading-[13px] font-bold`}>{rx.billed}</td>
            <td className={`${CELL} pl-1 text-xs leading-[13px] font-bold`}>{rx.lastFilled}</td>
            <td />
            <td className={`${CELL} pl-2.5`}>{rx.prescribed}</td>
            <td className={`${CELL} pl-0.5`}>{rx.sig}</td>
          </tr>
        ))}
      </tbody>
    </table>
    <div className="flex-1" />
    <div className={`${FOOTER} flex items-center gap-1 pl-[22px] text-[11px] whitespace-pre`}>
      <span className="flex items-center gap-1 mr-1"><FaxIcon light />Fax</span>
      <span className="flex items-center gap-0.5 mr-0.5"><PageIcon letter="T" />Taper</span>
      <span className="flex items-center gap-0.5"><BottleSmall className="w-3.5 h-[15px]" accent="x" />No Refill</span>
      <span className="flex items-center gap-0.5 mr-0.5">
        <svg viewBox="0 0 14 14" className="w-3.5 h-3.5"><path d="m7 0 7 14H0z" fill="#e4453f" /><path d="M7 5v4M7 10.500v2" stroke="#fff" strokeWidth="1.500" /></svg>
        Expired
      </span>
      <span className="flex items-center gap-0.5 mr-0.5"><PageIcon letter="R" badge="dot" />Hold</span>
      <span className="flex items-center gap-0.5"><PageIcon letter="H" />HOA</span>
      <span className="flex items-center gap-0.5"><PageIcon letter="R" badge="mark" />Rx Error</span>
      <span className="flex items-center gap-1 mr-1"><BottleSmall className="w-3.5 h-[15px]" accent="arrow" />Transferred Refill</span>
      <span>* Rx(s) are not verified</span>
    </div>
  </div>
);

const Toolbar = () => (
  <div className="flex items-center gap-0.5 h-8 shrink-0 px-0.5 border-t border-[#4d6f86] bg-linear-to-b from-[#4ba0d3] to-[#2080be]">
    <ToolButton label="Fill" size="w-[78px] pr-4"><BottleSmall className="w-4 h-[18px]" amber /></ToolButton>
    <ToolButton label="Previous Fills" size="w-[115px] pr-1.5"><BottleSmall className="w-4 h-[18px]" accent="back" /></ToolButton>
    <ToolButton label="Fill Quickview" size="w-[117px] pr-1.5"><BottleSmall className="w-4 h-[18px]" accent="frame" /></ToolButton>
    <ToolButton label="Fill Queue" size="w-[96px] pr-1.5"><BottleSmall className="w-4 h-[18px]" accent="queue" /></ToolButton>
    <ToolButton label="NDC Verification" size="w-[122px]">
      <svg viewBox="0 0 18 18" className="w-4 h-4" fill="#eef2f4" stroke="#4a4a4a" strokeWidth="1.500"><path d="m3 9 6-7c4-4 9 1 6 5l-7 9c-4 3-9-2-5-7z" /><circle cx="11" cy="12" r="5" fill="#3f9b45" stroke="none" /><path d="m8.500 12 2 2 3-4" stroke="#fff" fill="none" /></svg>
    </ToolButton>
    <ToolButton label="Refill" size="w-[79px] pr-4">
      <svg viewBox="0 0 18 18" className="w-4 h-4" fill="#f4f4f4" stroke="#4a4a4a" strokeWidth="1.500"><path d="M1 4V1h12v12h3v4H6c-2 0-2-1-2-3V1" /><circle cx="9" cy="7" r="2.500" fill="#f9b31c" stroke="none" /></svg>
    </ToolButton>
    <ToolButton label="Refill Request" size="w-[117px] pr-1.5"><BottleSmall className="w-4 h-[18px]" accent="refresh" /></ToolButton>
    <label htmlFor="pack-id" className="ml-auto mr-1.5 text-xs font-bold text-white">Pack ID:</label>
    <input id="pack-id" className="w-20 h-6 bg-white" />
    <div className="flex gap-1 ml-0.5">
      <ToolButton label="MAR" size="w-[77px] pr-4"><PrinterIcon /></ToolButton>
      <ToolButton label="Label" size="w-[77px] pr-3"><PrinterIcon /></ToolButton>
      <ToolButton label="Drug" size="w-[77px] pr-3"><PrinterIcon /></ToolButton>
    </div>
  </div>
);

/* ---------- Child window ---------- */

const QuickviewWindow = () => (
  <main className="flex-1 flex flex-col px-[3px] pt-0.5 pb-0.5 bg-[#a0a4a8]">
    <div className="flex-1 flex flex-col px-1.5 pb-[7px] rounded-t-md border border-black bg-[#b9d1ea]">
      <div className="flex items-center h-[30px] shrink-0 -mx-1.5 px-2 pt-1.5 rounded-t-md bg-linear-to-b from-[#97b5d3] to-[#b4cee8]">
        <Logo className="w-[15px] h-[15px] ml-px mr-[5px]" />
        <h1 className="font-['Open_Sans',sans-serif] text-[11px] text-[#111]">LTC Quickview</h1>
        <div className="ml-auto flex gap-0.5 text-[#555]">
          <button aria-label="Minimize window" className="w-8 h-[18px] grid place-items-center rounded-xs border border-[#6b8099] bg-linear-to-b from-[#c8dbee] to-[#a9c3de]">
            <span className="w-2.5 h-1 mt-1 bg-white border border-[#666]" />
          </button>
          <button aria-label="Restore window" className="w-8 h-[18px] grid place-items-center rounded-xs border border-[#91aac4] bg-linear-to-b from-[#bcd3ea] to-[#abc6e1]">
            <svg viewBox="0 0 11 9" className="w-[11px] h-[9px]" fill="#e8eef4" stroke="#555"><path d="M.5.5h10v8H.5zM3.500 3.500h4v2h-4z" /></svg>
          </button>
          <button aria-label="Close window" className="w-8 h-[18px] grid place-items-center rounded-xs border border-[#6d2a22] bg-linear-to-b from-[#e3a193] via-[#c8402c] to-[#d0604c] text-white">
            <X size={12} strokeWidth={4} />
          </button>
        </div>
      </div>
      <div className="flex-1 flex flex-col border border-b-0 border-[#59656d]">
        <Summary />
        <div className="flex-1 flex">
          <PatientList />
          <DrugGrid />
          <div className="w-[9px] shrink-0 bg-[#808080]" />
          <section className="flex-1 min-w-0 flex flex-col bg-white">
            <div className="flex-1 flex">
              <DoseGrid />
              <DetailGrid />
            </div>
            <Scrollbar thumb="ml-[260px] w-[564px]" />
          </section>
        </div>
        <Toolbar />
      </div>
    </div>
  </main>
);

/* ---------- Status bar and taskbar ---------- */

const StatusBar = () => (
  <div className="flex h-4 shrink-0 overflow-hidden bg-[#f0f0f0] border-t border-[#b5b5b5] text-[11px] whitespace-pre leading-[18px]">
    <span className="flex-1 pl-0.5 leading-[14px] font-['Open_Sans',sans-serif]">Ready</span>
    <span className="w-[89px] border-l border-[#c4c4c4]" />
    <a href="#user" className="w-[198px] border-l border-[#c4c4c4] text-center text-xs leading-[18px] font-bold text-[#0000c8]">Pharmacist, Ronald (rph)</a>
    <span className="w-[274px] border-l border-[#c4c4c4] pl-[17px]">Ver: 11.0 ( Rel 1.0 )   Login Since:03/24/22 10:32</span>
    <span className="w-[177px] border-l border-[#c4c4c4] pl-6">Computer: laptop-n6e49ra4</span>
    <span className="w-[116px] flex items-start gap-1">
      <svg viewBox="0 0 16 16" className="w-4 h-4 mt-0.5"><path d="M1 1h9v13H1z" fill="#4a8fd8" /><circle cx="10" cy="7" r="4" fill="#f0a040" /><path d="M4 16c0-5 12-5 12 0z" fill="#e8e8e8" /></svg>
      3-24-22 10:48:39
    </span>
  </div>
);

const Taskbar = () => (
  <footer className="flex h-10 shrink-0 bg-linear-to-r from-[#001722] to-[#000b15] text-white font-['Open_Sans',sans-serif]">
    <button aria-label="Start" className="w-12 grid place-items-center">
      <svg viewBox="0 0 16 16" className="w-4 h-4" fill="#fff"><path d="m0 2.200 7-1v6.300H0zM8 1l8-1v7.500H8zM0 8.500h7v6.300l-7-1zM8 8.500h8V16l-8-1z" /></svg>
    </button>
    <label className="w-[344px] flex items-center gap-2.5 pl-[11px] bg-[#f2f2f2] border border-[#bbb] text-[#444]">
      <Search size={18} strokeWidth={1.5} className="-scale-x-100" color="#222" />
      <input aria-label="Search" placeholder="Type here to search" className="flex-1 text-sm placeholder:text-[#444]" />
    </label>
    <button aria-label="Task view" className="w-12 grid place-items-center">
      <svg viewBox="0 0 17 16" className="w-[17px] h-4" fill="none" stroke="#fff" strokeWidth="1.200"><path d="M1 4h10v8H1zM1 0v2h10V0M1 16v-2h10v2M15 0v16M14 5h2.500v3H14" /></svg>
    </button>
    <button aria-label="Edge" className="w-[52px] grid place-items-center">
      <svg viewBox="0 0 24 24" className="w-6 h-6">
        <circle cx="12" cy="12" r="11.500" fill="#1277c9" />
        <path d="M1 11C2 4 7 .5 12.500.5 19 .5 24 5 23.500 11c-.3 3.500-4 5-7.500 4.500-2-.3-1.500-1.500-1-3C15.500 9 12 7 8.500 7 5 7 2 9 1 11z" fill="#3fc8b4" />
        <path d="M9 10c-2 4 0 10 6 11.500 3 .5 5-1 6.500-3-6 2-10-1-10-5 0-1 .5-2 1-3-1-1-2.500-1-3.500-.5z" fill="#0b3f86" />
      </svg>
    </button>
    <button aria-label="File Explorer" className="w-[49px] grid place-items-center">
      <svg viewBox="0 0 22 20" className="w-[22px] h-5"><path d="M0 1h8l2 3h12v15H0z" fill="#e9a825" /><path d="M0 6h22v13H0z" fill="#fcd462" /><path d="M4 19v-7h14v7h-4v-3H8v3z" fill="#3d92d8" /></svg>
    </button>
    <button aria-label="SRx" className="w-12 grid place-items-center bg-[#3a4c57] border-b-[3px] border-[#76b9ed]">
      <Logo className="w-[22px] h-[22px]" />
    </button>
    <div className="ml-auto flex items-center gap-[7px] pr-1">
      <ChevronUp size={16} strokeWidth={1.5} />
      <svg viewBox="0 0 18 16" className="w-[18px] h-4" fill="none" stroke="#fff" strokeWidth="1.200"><path d="M6 3h11v8H4V7M7 14h7M10.500 11v3M1 1h4v4H1zM3 5v9h2" /></svg>
      <Volume2 size={18} strokeWidth={1.3} />
      <time className="w-[54px] text-center text-[11px] leading-[18px]">10:48 AM<br />3/24/2022</time>
      <button aria-label="Notifications" className="ml-2 mr-3">
        <svg viewBox="0 0 18 17" className="w-[18px] h-[17px]" fill="none" stroke="#fff" strokeWidth="1.300"><path d="M1 1h16v12h-5l-3 3-3-3H1z" /></svg>
      </button>
      <div className="h-10 border-l border-[#4d5a63]" />
    </div>
  </footer>
);

export default function App() {
  return (
    <div className="min-h-screen flex flex-col bg-white text-black font-['Liberation_Sans',Arial,sans-serif]">
      <AppHeader />
      <QuickviewWindow />
      <StatusBar />
      <Taskbar />
    </div>
  );
}
